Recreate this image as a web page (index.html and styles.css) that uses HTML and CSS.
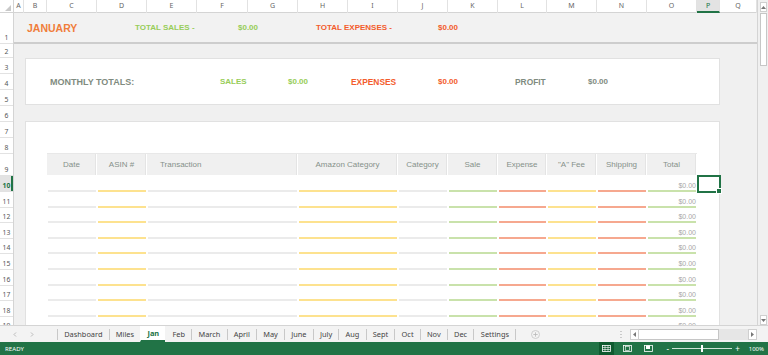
FILE: index.html
```html
<!DOCTYPE html>
<html>
<head>
<meta charset="utf-8">
<link rel="stylesheet" href="styles.css">
</head>
<body>
<div class="app">
  <div class="workspace">
    <div class="grid-area">
      <div class="colheads">
        <div class="corner"><svg width="6" height="6" viewBox="0 0 6 6"><path d="M6 0V6H0Z" fill="#c9c9c9"/></svg></div>
        <div class="ch">A</div><div class="ch">B</div><div class="ch">C</div><div class="ch">D</div><div class="ch">E</div><div class="ch">F</div><div class="ch">G</div><div class="ch">H</div><div class="ch">I</div><div class="ch">J</div><div class="ch">K</div><div class="ch">L</div><div class="ch">M</div><div class="ch">N</div><div class="ch">O</div><div class="ch sel">P</div><div class="ch">Q</div>
      </div>
      <div class="body">
        <div class="rowheads">
          <div class="rh r31">1</div>
          <div class="rh r14">2</div>
          <div class="rh r16">3</div>
          <div class="rh r16">4</div>
          <div class="rh r16">5</div>
          <div class="rh r16">6</div>
          <div class="rh r16">7</div>
          <div class="rh r16">8</div>
          <div class="rh r22">9</div>
          <div class="rh r16 sel">10</div>
          <div class="rh rn">11</div>
          <div class="rh rn">12</div>
          <div class="rh rn">13</div>
          <div class="rh rn">14</div>
          <div class="rh rn">15</div>
          <div class="rh rn">16</div>
          <div class="rh rn">17</div>
          <div class="rh rn">18</div>
          <div class="rh rn">19</div>
        </div>
        <div class="sheet">
          <div class="band">
            <span class="jan">JANUARY</span>
            <span class="green w103">TOTAL SALES -</span>
            <span class="green w78">$0.00</span>
            <span class="red w122">TOTAL EXPENSES -</span>
            <span class="red">$0.00</span>
          </div>
          <div class="panel totals">
            <span class="grey big w170">MONTHLY TOTALS:</span>
            <span class="green w68">SALES</span>
            <span class="green w63">$0.00</span>
            <span class="red exp w87">EXPENSES</span>
            <span class="red w77">$0.00</span>
            <span class="grey prof w73">PROFIT</span>
            <span class="grey">$0.00</span>
          </div>
          <div class="panel ledger">
            <div class="thead">
              <div class="th c50">Date</div>
              <div class="th c50">ASIN #</div>
              <div class="th c151 left">Transaction</div>
              <div class="th c100">Amazon Category</div>
              <div class="th c50">Category</div>
              <div class="th c50">Sale</div>
              <div class="th c49">Expense</div>
              <div class="th c50">"A" Fee</div>
              <div class="th c50">Shipping</div>
              <div class="th c50">Total</div>
            </div>
            <div class="tr first"><div class="td d48 lg"></div><div class="td d48 ye"></div><div class="td d149 lg"></div><div class="td d98 ye"></div><div class="td d48 lg"></div><div class="td d48 gn"></div><div class="td d47 sa"></div><div class="td d48 ye"></div><div class="td d48 sa"></div><div class="td d48 gn">$0.00</div></div>
            <div class="tr"><div class="td d48 lg"></div><div class="td d48 ye"></div><div class="td d149 lg"></div><div class="td d98 ye"></div><div class="td d48 lg"></div><div class="td d48 gn"></div><div class="td d47 sa"></div><div class="td d48 ye"></div><div class="td d48 sa"></div><div class="td d48 gn">$0.00</div></div>
            <div class="tr"><div class="td d48 lg"></div><div class="td d48 ye"></div><div class="td d149 lg"></div><div class="td d98 ye"></div><div class="td d48 lg"></div><div class="td d48 gn"></div><div class="td d47 sa"></div><div class="td d48 ye"></div><div class="td d48 sa"></div><div class="td d48 gn">$0.00</div></div>
            <div class="tr"><div class="td d48 lg"></div><div class="td d48 ye"></div><div class="td d149 lg"></div><div class="td d98 ye"></div><div class="td d48 lg"></div><div class="td d48 gn"></div><div class="td d47 sa"></div><div class="td d48 ye"></div><div class="td d48 sa"></div><div class="td d48 gn">$0.00</div></div>
            <div class="tr"><div class="td d48 lg"></div><div class="td d48 ye"></div><div class="td d149 lg"></div><div class="td d98 ye"></div><div class="td d48 lg"></div><div class="td d48 gn"></div><div class="td d47 sa"></div><div class="td d48 ye"></div><div class="td d48 sa"></div><div class="td d48 gn">$0.00</div></div>
            <div class="tr"><div class="td d48 lg"></div><div class="td d48 ye"></div><div class="td d149 lg"></div><div class="td d98 ye"></div><div class="td d48 lg"></div><div class="td d48 gn"></div><div class="td d47 sa"></div><div class="td d48 ye"></div><div class="td d48 sa"></div><div class="td d48 gn">$0.00</div></div>
            <div class="tr"><div class="td d48 lg"></div><div class="td d48 ye"></div><div class="td d149 lg"></div><div class="td d98 ye"></div><div class="td d48 lg"></div><div class="td d48 gn"></div><div class="td d47 sa"></div><div class="td d48 ye"></div><div class="td d48 sa"></div><div class="td d48 gn">$0.00</div></div>
            <div class="tr"><div class="td d48 lg"></div><div class="td d48 ye"></div><div class="td d149 lg"></div><div class="td d98 ye"></div><div class="td d48 lg"></div><div class="td d48 gn"></div><div class="td d47 sa"></div><div class="td d48 ye"></div><div class="td d48 sa"></div><div class="td d48 gn">$0.00</div></div>
            <div class="tr"><div class="td d48 lg"></div><div class="td d48 ye"></div><div class="td d149 lg"></div><div class="td d98 ye"></div><div class="td d48 lg"></div><div class="td d48 gn"></div><div class="td d47 sa"></div><div class="td d48 ye"></div><div class="td d48 sa"></div><div class="td d48 gn">$0.00</div></div>
            <div class="tr"><div class="td d48 lg"></div><div class="td d48 ye"></div><div class="td d149 lg"></div><div class="td d98 ye"></div><div class="td d48 lg"></div><div class="td d48 gn"></div><div class="td d47 sa"></div><div class="td d48 ye"></div><div class="td d48 sa"></div><div class="td d48 gn">$0.00</div></div>
          </div>
          <div class="cursor"></div>
        </div>
      </div>
    </div>
    <div class="vscroll">
      <div class="vbtn"><svg width="5" height="3" viewBox="0 0 5 3"><path d="M0 3L2.5 0L5 3Z" fill="#777"/></svg></div>
      <div class="vthumb"></div>
      <div class="vtrack"></div>
      <div class="vbtn"><svg width="5" height="3" viewBox="0 0 5 3"><path d="M0 0L2.5 3L5 0Z" fill="#777"/></svg></div>
    </div>
  </div>
  <div class="tabbar">
    <div class="nav">
      <svg width="4" height="5" viewBox="0 0 4 5"><path d="M3 0.5L1 2.5L3 4.5" fill="none" stroke="#b4b4b4" stroke-width="0.9"/></svg>
      <svg width="4" height="5" viewBox="0 0 4 5"><path d="M1 0.5L3 2.5L1 4.5" fill="none" stroke="#b4b4b4" stroke-width="0.9"/></svg>
    </div>
    <div class="tabs">
      <div class="tab">Dashboard</div>
      <div class="tab">Miles</div>
      <div class="tab active">Jan</div>
      <div class="tab">Feb</div>
      <div class="tab">March</div>
      <div class="tab">April</div>
      <div class="tab">May</div>
      <div class="tab">June</div>
      <div class="tab">July</div>
      <div class="tab">Aug</div>
      <div class="tab">Sept</div>
      <div class="tab">Oct</div>
      <div class="tab">Nov</div>
      <div class="tab">Dec</div>
      <div class="tab last">Settings</div>
    </div>
    <div class="add"><svg width="9" height="9" viewBox="0 0 9 9"><circle cx="4.5" cy="4.5" r="4" fill="none" stroke="#c4c4c4" stroke-width="0.8"/><path d="M4.5 2.3V6.7M2.3 4.5H6.7" stroke="#b8b8b8" stroke-width="0.8"/></svg></div>
    <div class="spacer"></div>
    <div class="dots"><svg width="2" height="9" viewBox="0 0 2 9"><circle cx="1" cy="1.5" r="0.6" fill="#999"/><circle cx="1" cy="4.5" r="0.6" fill="#999"/><circle cx="1" cy="7.5" r="0.6" fill="#999"/></svg></div>
    <div class="hscroll">
      <div class="hbtn"><svg width="3" height="5" viewBox="0 0 3 5"><path d="M3 0L0 2.5L3 5Z" fill="#777"/></svg></div>
      <div class="hthumb"></div>
      <div class="htrack"></div>
      <div class="hbtn"><svg width="3" height="5" viewBox="0 0 3 5"><path d="M0 0L3 2.5L0 5Z" fill="#777"/></svg></div>
    </div>
  </div>
  <div class="status">
    <span class="ready">READY</span>
    <div class="spacer"></div>
    <div class="view on"><svg width="9" height="7" viewBox="0 0 9 7"><rect x="0.5" y="0.5" width="8" height="6" fill="none" stroke="#fff" stroke-width="0.8"/><path d="M0.5 2.5H8.5M0.5 4.5H8.5M3 0.5V6.5M6 0.5V6.5" stroke="#fff" stroke-width="0.6"/></svg></div>
    <div class="view"><svg width="9" height="7" viewBox="0 0 9 7"><rect x="0.5" y="0.5" width="8" height="6" fill="none" stroke="#fff" stroke-width="0.8"/><rect x="2.5" y="1.5" width="4" height="4" fill="none" stroke="#fff" stroke-width="0.6"/></svg></div>
    <div class="view"><svg width="9" height="7" viewBox="0 0 9 7"><rect x="0.5" y="0.5" width="8" height="6" fill="none" stroke="#fff" stroke-width="0.8"/><rect x="2" y="0.5" width="4" height="3.5" fill="#fff"/></svg></div>
    <div class="zoom">
      <span class="zsign">-</span>
      <div class="zline"><div class="zthumb"></div></div>
      <span class="zsign">+</span>
    </div>
    <span class="pct">100%</span>
  </div>
</div>
</body>
</html>
```
FILE: styles.css
```css
*{box-sizing:border-box;margin:0;padding:0}
html,body{width:768px;height:355px;overflow:hidden;background:#fff}
body{font-family:"Liberation Sans",Arial,sans-serif}
.app{width:768px;height:355px;display:flex;flex-direction:column}
.workspace{display:flex;height:325px;flex:none}
.grid-area{width:757px;display:flex;flex-direction:column}

.colheads{height:13px;flex:none;display:grid;grid-template-columns:14px 10px 23px 50px 50px 50px 51px 50px 50px 50px 50px 50px 49px 50px 50px 50px 23px 37px;background:#fff;border-bottom:1px solid #d4d4d4}
.corner{display:flex;align-items:flex-end;justify-content:flex-end;padding:0 2px 2px 0;border-right:1px solid #d4d4d4}
.ch{font-family:"Noto Sans",sans-serif;font-size:7px;color:#666;text-align:center;line-height:12px;border-right:1px solid #e2e2e2}
.ch.sel{background:#e3e3e3;color:#217346;border-bottom:2px solid #217346;line-height:11px}

.body{display:flex;height:312px;flex:none}
.rowheads{width:14px;flex:none;background:#fff;border-right:1px solid #d4d4d4;display:flex;flex-direction:column;overflow:hidden}
.rh{flex:none;font-family:"Noto Sans",sans-serif;font-size:6.8px;color:#555;border-bottom:1px solid #e2e2e2;display:flex;align-items:flex-end;justify-content:center;line-height:9px;padding-bottom:1px}
.r31{height:31px}
.r14{height:14px}
.r16{height:16px}
.r22{height:22px}
.rn{height:15.6px}
.rh.sel{background:#e3e3e3;color:#217346;font-weight:bold;box-shadow:inset -2px 0 0 #217346}

.sheet{width:743px;background:#f0f0f0;position:relative;overflow:hidden}
.band{height:31px;background:#f2f2f2;border-bottom:2px solid #cdcdcd;display:flex;align-items:center;padding-left:13px;font-weight:bold;font-size:8px;white-space:nowrap}
.jan{width:108px;font-size:10.5px;color:#f07d3b}
.green{color:#97cd58}
.red{color:#f35c2c}
.grey{color:#7f8b80}
.w103{width:103px}
.w78{width:78px}
.w122{width:122px}
.w170{width:170px}
.w68{width:68px}
.w63{width:63px}
.w87{width:87px}
.w77{width:77px}
.w73{width:73px}

.panel{margin-left:11px;width:695px;background:#fff;border:1px solid #e1e1e1}
.totals{margin-top:14px;height:47px;display:flex;align-items:center;padding-left:24px;font-weight:bold;font-size:8px;white-space:nowrap}
.big{font-size:9px}
.exp{font-size:8.4px}
.prof{font-size:8.4px}

.ledger{margin-top:16px;height:300px;padding:31px 0 0 21px}
.thead{display:flex;width:650px;height:22px;background:#f0f0f0;border-top:1px solid #e8e8e8}
.th{font-size:8px;color:#86918a;line-height:21px;text-align:center;border-right:1px solid #fff;box-shadow:inset -1px 0 0 #e4e4e4;white-space:nowrap}
.th.left{text-align:left;padding-left:13px}
.c50{width:50px}
.c49{width:49px}
.c100{width:100px}
.c151{width:151px}

.tr{display:flex;width:650px;height:15.6px}
.tr.first{height:17px}
.td{margin:0 1px;border-bottom:2px solid #e9e9e9;display:flex;align-items:flex-end;justify-content:flex-end;font-size:7px;line-height:8px;color:#a7a7a7}
.d48{width:48px}
.d47{width:47px}
.d98{width:98px}
.d149{width:149px}
.lg{border-bottom-color:#ebebeb}
.ye{border-bottom-color:#fde28f}
.gn{border-bottom-color:#c9e2ab}
.sa{border-bottom-color:#f6a88f}

.cursor{position:absolute;left:683px;top:162px;width:24px;height:18px;border:2px solid #217346}
.cursor::after{content:"";position:absolute;right:-3px;bottom:-3px;width:4px;height:4px;background:#217346;border:1px solid #fff}

.vscroll{width:11px;flex:none;background:#f0f0f0;border-left:1px solid #d4d4d4;display:flex;flex-direction:column;padding:2px 1px 0 2px}
.vbtn{height:10px;flex:none;display:flex;align-items:center;justify-content:center;background:#fff;border:1px solid #cfcfcf}
.vthumb{height:53px;flex:none;background:#fff;border:1px solid #c6c6c6;margin-top:1px}
.vtrack{flex:1}

.tabbar{height:17px;flex:none;display:flex;align-items:center;background:#f3f3f3;border-top:1px solid #d4d4d4;font-family:"Noto Sans",sans-serif;font-size:7.4px;color:#444}
.nav{width:57px;flex:none;display:flex;align-items:center;gap:13px;padding-left:13px}
.tabs{display:flex;align-items:center;height:16px}
.tab{height:11px;line-height:11px;padding:0 6.2px;border-left:1px solid #c8c8c8;white-space:nowrap}
.tab.last{border-right:1px solid #c8c8c8;padding:0 6.5px}
.tab.active{height:16px;line-height:15px;background:#fff;color:#217346;font-weight:bold;border-bottom:2px solid #217346;border-left-color:transparent}
.tab.active+.tab{border-left-color:transparent}
.add{margin-left:15px;display:flex;align-items:center}
.spacer{flex:1}
.dots{display:flex;align-items:center;margin-right:8px}
.hscroll{width:127px;height:11px;display:flex;margin-right:11px;background:#e6e6e6}
.hbtn{width:9px;flex:none;display:flex;align-items:center;justify-content:center;background:#fff;border:1px solid #cfcfcf}
.hthumb{width:80px;flex:none;background:#fff;border:1px solid #c6c6c6;border-left:none}
.htrack{flex:1}

.status{height:13px;flex:none;background:#217346;color:#fff;display:flex;align-items:center;font-family:"Noto Sans",sans-serif;font-size:6px}
.ready{padding-left:5px;letter-spacing:0.1px}
.view{width:15px;height:13px;display:flex;align-items:center;justify-content:center;margin-right:6px}
.view.on{background:#0f5a2f}
.zoom{display:flex;align-items:center;gap:3px;margin-left:5px}
.zsign{font-size:8px;line-height:8px}
.zline{width:60px;height:1px;background:#cfe3d6;position:relative}
.zthumb{position:absolute;left:29px;top:-3px;width:2px;height:7px;background:#fff}
.pct{margin:0 4px 0 9px}
```
